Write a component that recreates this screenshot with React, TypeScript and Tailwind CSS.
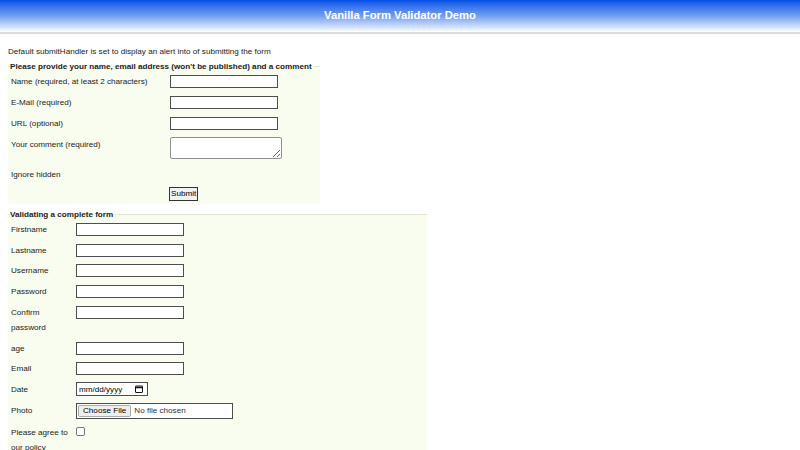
import React from 'react';

const rowsOne = [
  { label: 'Name (required, at least 2 characters)' },
  { label: 'E-Mail (required)' },
  { label: 'URL (optional)' },
];

const rowsTwo = ['Firstname', 'Lastname', 'Username', 'Password', 'Confirm password', 'age', 'Email'];

function TextBox({ width }: { width: string }) {
  return <input type="text" className={`${width} h-[13px] border border-[#4d4d4d] bg-white px-[2px] text-[8px] outline-none`} />;
}

export default function App() {
  return (
    <div className="min-h-[450px] bg-white font-['Liberation_Sans',Arial,sans-serif] text-[8.125px] leading-[9px] text-[#222]">
      {/* Header */}
      <header className="h-[31px] bg-gradient-to-b from-[#0050e6] via-[#6f9cf0] to-[#f6f8fd] flex items-center justify-center">
        <h1 className="text-[11.25px] font-bold text-white">Vanilla Form Validator Demo</h1>
      </header>
      <div className="mt-[1px] h-[2px] bg-[#dcdcdc]" />

      <div className="px-[8px]">
        <p className="mt-[13px] mb-[6px]">Default submitHandler is set to display an alert into of submitting the form</p>

        {/* Comment form */}
        <fieldset className="w-[312px] border-t border-[#e2e6d6] bg-[#f9fdf0]">
          <legend className="ml-[2px] font-bold leading-[9px] pr-[2px]">
            Please provide your name, email address (won't be published) and a comment
          </legend>
          {rowsOne.map((row) => (
            <div key={row.label} className="flex items-start py-[3px]">
              <label className="w-[162px] pl-[3px] leading-[15px]">{row.label}</label>
              <div className="pt-[1px]">
                <TextBox width="w-[108px]" />
              </div>
            </div>
          ))}
          <div className="flex items-start pt-[3px] pb-[5px]">
            <label className="w-[162px] pl-[3px] leading-[15px]">Your comment (required)</label>
            <textarea className="block w-[112px] h-[22px] border border-[#8f8f8f] rounded-[2px] bg-white text-[8px] outline-none" />
          </div>
          <div className="flex items-start py-[3px]">
            <label className="w-[162px] pl-[3px] leading-[15px]">Ignore hidden</label>
          </div>
          <div className="flex pt-[2px] pb-[3px]">
            <div className="w-[161px]" />
            <button className="h-[14px] px-[1px] border border-[#333] bg-[#f2f2f2] leading-[12px] text-black">Submit</button>
          </div>
        </fieldset>

        {/* Complete form */}
        <fieldset className="mt-[6px] w-[419px] border-t border-[#e2e6d6] bg-[#f9fdf0]">
          <legend className="ml-[2px] font-bold leading-[9px] pr-[2px]">Validating a complete form</legend>
          {rowsTwo.map((label) => (
            <div key={label} className="flex items-start py-[2.875px]">
              <label className="w-[68px] pl-[3px] pr-[5px] leading-[15px]">{label}</label>
              <div className="pt-[1px]">
                <TextBox width="w-[108px]" />
              </div>
            </div>
          ))}
          <div className="flex items-start py-[2.875px]">
            <label className="w-[68px] pl-[3px] pr-[5px] leading-[15px]">Date</label>
            <div className="flex items-center w-[72px] h-[14px] border border-[#4d4d4d] bg-white pl-[2px] pr-[4px] text-black">
              <span className="flex-1">mm/dd/yyyy</span>
              <svg width="8" height="8" viewBox="0 0 8 8" fill="none" stroke="#111" strokeWidth="1">
                <rect x="0.5" y="1" width="7" height="6.5" rx="0.5" />
                <line x1="0.5" y1="2.5" x2="7.5" y2="2.5" strokeWidth="1.5" />
              </svg>
            </div>
          </div>
          <div className="flex items-start py-[2.875px]">
            <label className="w-[68px] pl-[3px] pr-[5px] leading-[15px]">Photo</label>
            <div className="flex items-center gap-[3px] w-[157px] h-[16px] border border-[#4d4d4d] bg-white pl-[1px]">
              <span className="h-[12px] px-[4px] border border-[#aaa] rounded-[2px] bg-[#efefef] leading-[10px] text-black">Choose File</span>
              <span className="text-[#333]">No file chosen</span>
            </div>
          </div>
          <div className="flex items-start py-[2.875px]">
            <label className="w-[68px] pl-[3px] pr-[5px] leading-[15px]">Please agree to our policy</label>
            <input type="checkbox" className="mt-[2px] appearance-none w-[9px] h-[9px] border border-[#767676] rounded-[2px] bg-white" />
          </div>
        </fieldset>
      </div>
    </div>
  );
}
